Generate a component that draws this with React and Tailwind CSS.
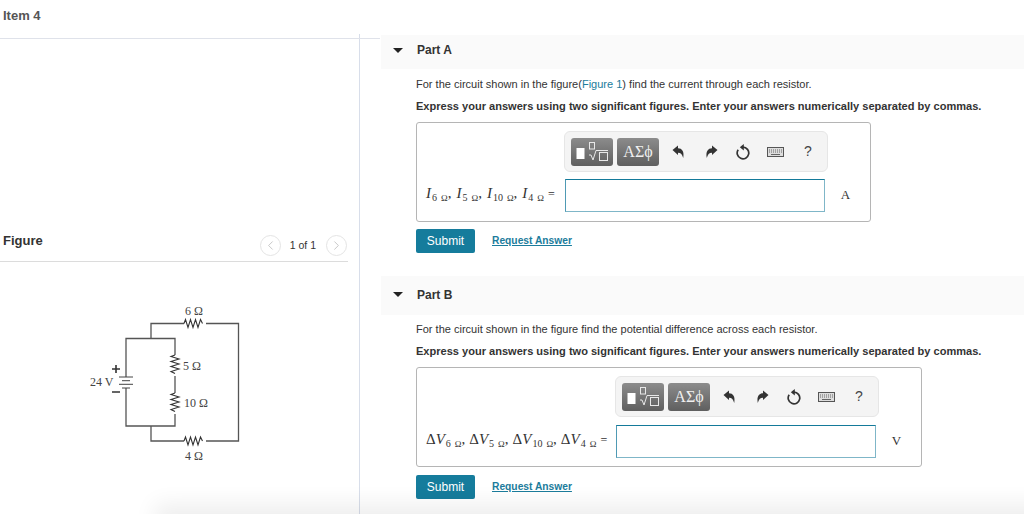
import { ChevronLeft, ChevronRight } from 'lucide-react'

const SANS = "font-['Liberation_Sans',Arial,sans-serif]"

function Term({ delta, letter, sub, last }) {
  return (
    <span className="whitespace-nowrap">
      {delta && <span>Δ</span>}
      <i>{letter}</i>
      <sub className="relative top-[3px] ml-px align-baseline text-[10px] not-italic">
        {sub}
        <span className="ml-[4px] text-[9px]">Ω</span>
      </sub>
      {!last && <span className={delta ? 'mr-[4px]' : 'mr-[5px]'}>,</span>}
    </span>
  )
}

function Toolbar() {
  return (
    <div className="flex h-[41px] w-[264px] items-center rounded-md border border-[#e6e6e6] bg-[#f4f4f4] pl-[6px]">
      <div className="flex h-[28px] w-[42px] items-center justify-center rounded-[3px] bg-gradient-to-b from-[#8c8c8c] to-[#5f5f5f]">
        <svg width="36" height="24" viewBox="0 0 36 24">
          <rect x="2.5" y="8" width="8" height="11" fill="#fff" />
          <rect x="15.5" y="2.5" width="5" height="6.5" fill="none" stroke="#e8e8e8" />
          <path d="M15 15l2 0 2 5 3-9.5h12" fill="none" stroke="#e8e8e8" />
          <rect x="25.5" y="12.5" width="8" height="8" fill="none" stroke="#e8e8e8" />
        </svg>
      </div>
      <div className="ml-[4px] flex h-[28px] w-[42px] items-center justify-center rounded-[3px] bg-gradient-to-b from-[#8c8c8c] to-[#5f5f5f] font-['Liberation_Serif',serif] text-[16px] text-[#f0f0f0]">
        ΑΣϕ
      </div>
      <svg className="ml-[13px]" width="13" height="14" viewBox="0 0 13 14">
        <path d="M0.5 5L6 0.5V3.2C10 3.2 12.5 6.5 11.2 13 10.2 9.5 9 7.8 6 7.8V10Z" fill="#333" />
      </svg>
      <svg className="ml-[20px]" width="13" height="14" viewBox="0 0 13 14">
        <path d="M12.5 5L7 0.5V3.2C3 3.2 0.5 6.5 1.8 13 2.8 9.5 4 7.8 7 7.8V10Z" fill="#333" />
      </svg>
      <svg className="ml-[17px]" width="16" height="16" viewBox="0 0 16 16">
        <path d="M8 3.2A5.8 5.8 0 1 1 3.2 5.7" fill="none" stroke="#333" strokeWidth="1.7" />
        <path d="M8.8 0L4.8 3.2 8.8 6.4Z" fill="#333" />
      </svg>
      <svg className="ml-[16px]" width="17" height="10" viewBox="0 0 17 10">
        <rect x="0.5" y="0.5" width="16" height="9" fill="#ddd" stroke="#555" />
        <path d="M2 3h13M2 5h13" stroke="#666" strokeDasharray="1 1" />
        <path d="M4 7.5h9" stroke="#666" />
      </svg>
      <span className="ml-[20px] text-[14px] text-[#444]">?</span>
    </div>
  )
}

function AnswerBox({ boxWidth, toolbarLeft, labelWidth, rowGap, unit, delta }) {
  const vars = ['6', '5', '10', '4']
  return (
    <div className="h-[100px] rounded-[3px] border border-[#b5b5b5] pt-[8px]" style={{ width: boxWidth }}>
      <div style={{ marginLeft: toolbarLeft }}>
        <Toolbar />
      </div>
      <div className="flex items-center pl-[9px]" style={{ marginTop: rowGap }}>
        <div className="relative -top-[2px] font-['Liberation_Serif',serif] text-[15px] text-[#333] whitespace-nowrap" style={{ width: labelWidth }}>
          {vars.map((v, i) => (
            <Term key={v} delta={delta} letter={delta ? 'V' : 'I'} sub={v} last={i === 3} />
          ))}
          <span className="ml-[4px] text-[12px]">=</span>
        </div>
        <div className="h-[33px] w-[260px] border border-[#147a9a] border-r-[#7fb6c8] border-b-[#7fb6c8] border-l-[#4f9ab4]" />
        <div className="relative -top-px flex-1 pr-[4px] text-center font-['Liberation_Serif',serif] text-[13px] text-[#333]">{unit}</div>
      </div>
    </div>
  )
}

function Part({ title, headerHeight, titlePad, gaps, children, answer }) {
  return (
    <section>
      <div className="flex items-center bg-[#fafafa]" style={{ height: headerHeight, paddingBottom: titlePad }}>
        <svg className="ml-[12px]" width="10" height="5" viewBox="0 0 10 5">
          <path d="M0 0h10L5 5z" fill="#222" />
        </svg>
        <span className="ml-[14px] text-[12px] font-bold text-[#333]">{title}</span>
      </div>
      <div className="pl-[35px]">
        <p className="text-[11.03px] leading-[14px] text-[#333] whitespace-nowrap" style={{ marginTop: gaps[0] }}>
          {children}
        </p>
        <p className="text-[11.05px] leading-[14px] font-bold text-[#333] whitespace-nowrap" style={{ marginTop: gaps[1] }}>
          Express your answers using two significant figures. Enter your answers numerically separated by commas.
        </p>
        <div style={{ marginTop: gaps[2] }}>{answer}</div>
        <div className="flex items-center" style={{ marginTop: gaps[3] }}>
          <button className="h-[24px] w-[59px] rounded-[2px] bg-[#157c9c] text-[12px] text-white">Submit</button>
          <a className="ml-[17px] text-[10.25px] font-bold text-[#1c7c9c] underline">Request Answer</a>
        </div>
      </div>
    </section>
  )
}

function Zig({ d }) {
  return <path d={d} fill="none" stroke="#333" strokeWidth="1.1" />
}

function Circuit() {
  const labels = [
    ['6 Ω', 185, 315],
    ['5 Ω', 183, 370],
    ['10 Ω', 184, 407],
    ['4 Ω', 185, 460],
    ['24 V', 90, 386],
  ]
  return (
    <svg width="160" height="170" viewBox="85 295 160 170" className="mt-[33px] ml-[85px]">
      <g fill="none" stroke="#555" strokeWidth="1.3">
        <path d="M151 338V323.5H184M206 323.5H238.5V441H206M184 441H151V426" />
        <path d="M126 377V338.5H175V355M175 376V393M175 414V426H126V388" />
      </g>
      <Zig d="M184 323.5l1.5-4 2.5 8 2.5-8 2.5 8 2.5-8 2.5 8 2.5-8 2 4" />
      <Zig d="M184 441l1.5-4 2.5 8 2.5-8 2.5 8 2.5-8 2.5 8 2.5-8 2 4" />
      <Zig d="M175 355l-4 1.5 8 2.5-8 2.5 8 2.5-8 2.5 8 2.5-8 2.5 4 2" />
      <Zig d="M175 393l-4 1.5 8 2.5-8 2.5 8 2.5-8 2.5 8 2.5-8 2.5 4 2" />
      <path d="M119 377h14M122 380.7h8M119 384.3h14M122 388h8" stroke="#444" strokeWidth="1" />
      <path d="M112 369h8M116 365v8M112 392h8" stroke="#333" strokeWidth="1.6" />
      {labels.map(([t, x, y]) => (
        <text key={t} x={x} y={y} fontFamily="'Liberation Serif', serif" fontSize="12" fill="#444">
          {t}
        </text>
      ))}
    </svg>
  )
}

function Pager() {
  return (
    <div className="relative top-[3px] mr-px flex items-center text-[10.5px] text-[#333]">
      <span className="flex h-[21px] w-[21px] items-center justify-center rounded-full border border-[#e4e4e4] text-[#b5b5b5]">
        <ChevronLeft size={15} strokeWidth={1.2} />
      </span>
      <span className="mr-[10px] ml-[9px]">1 of 1</span>
      <span className="flex h-[21px] w-[21px] items-center justify-center rounded-full border border-[#e4e4e4] text-[#b5b5b5]">
        <ChevronRight size={15} strokeWidth={1.2} />
      </span>
    </div>
  )
}

export default function App() {
  return (
    <div className={`${SANS} relative h-[514px] w-[1024px] overflow-hidden bg-white`}>
      <div className="h-[34px] pt-[7px] pl-[3px] text-[13px] font-bold leading-[17px] text-[#555]">Item 4</div>
      <div className="flex">
        <aside className="h-[480px] w-[360px] border-r border-[#d8deea]">
          <div className="mt-[4px] mr-[-21px] h-px bg-[#dfe2ea]" />
          <div className="mt-[190px] mr-[11px] flex h-[33px] items-center justify-between border-b border-[#dcdcdc] pb-[5px] pl-[3px]">
            <span className="relative -top-[2px] text-[13px] font-bold text-[#333]">Figure</span>
            <Pager />
          </div>
          <Circuit />
        </aside>
        <main className="ml-[21px] flex-1 pt-px">
          <Part
            title="Part A"
            headerHeight={34}
            titlePad={4}
            gaps={[8, 8, 9, 7]}
            answer={<AnswerBox boxWidth={455} toolbarLeft={147} labelWidth={139} rowGap={7} unit="A" />}
          >
            For the circuit shown in the figure(<span className="text-[#1c7c9c]">Figure 1</span>) find the current through each resistor.
          </Part>
          <div className="h-[23px]" />
          <Part
            title="Part B"
            headerHeight={39}
            titlePad={2}
            gaps={[7, 8, 9, 8]}
            answer={<AnswerBox boxWidth={506} toolbarLeft={198} labelWidth={190} rowGap={8} unit="V" delta />}
          >
            For the circuit shown in the figure find the potential difference across each resistor.
          </Part>
        </main>
      </div>
      {/* soft shadow rising from below the page edge */}
      <div className="pointer-events-none absolute -bottom-[10px] left-[165px] -right-[40px] h-[10px] bg-[#eee] shadow-[0_0_22px_10px_rgba(0,0,0,0.07)]" />
    </div>
  )
}
